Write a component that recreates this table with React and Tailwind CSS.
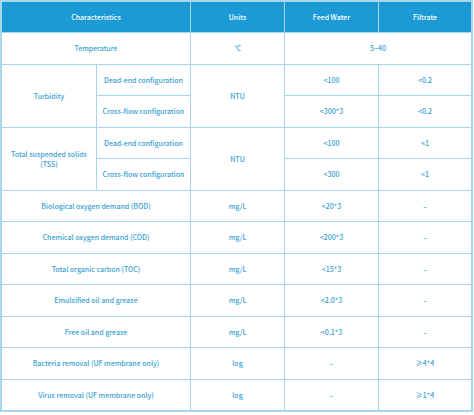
import React from "react";

const head = "bg-[#1b9ad6] text-white flex items-center justify-center text-center whitespace-nowrap";
const cell = "bg-white text-[#3a9fd2] flex items-center justify-center text-center whitespace-nowrap leading-[1.2]";

const simpleRows = [
  ["Biological oxygen demand (BOD)", "mg/L", "<20*3", "–"],
  ["Chemical oxygen demand (COD)", "mg/L", "<200*3", "–"],
  ["Total organic carbon (TOC)", "mg/L", "<15*3", "–"],
  ["Emulsified oil and grease", "mg/L", "<2.0*3", "–"],
  ["Free oil and grease", "mg/L", "<0.1*3", "–"],
  ["Bacteria removal (UF membrane only)", "log", "–", "≥4*4"],
  ["Virus removal (UF membrane only)", "log", "–", "≥1*4"],
];

const App = () => {
  return (
    <div
      className="w-[473px] h-[412px] bg-white"
      style={{ fontFamily: "'Noto Sans CJK SC', Lato, sans-serif" }}
    >
      <div className="w-full h-full border-2 border-[#a8d6ec] bg-[#a8d6ec] grid grid-cols-[94px_93px_93px_93px_92px] grid-rows-[repeat(13,minmax(0,1fr))] gap-px text-[7px] font-medium">
        {/* header */}
        <div className={`${head} col-span-2`}>Characteristics</div>
        <div className={head}>Units</div>
        <div className={head}>Feed Water</div>
        <div className={head}>Filtrate</div>

        {/* temperature */}
        <div className={`${cell} col-span-2`}>Temperature</div>
        <div className={cell}>°C</div>
        <div className={`${cell} col-span-2`}>5~40</div>

        {/* turbidity */}
        <div className={`${cell} row-span-2`}>Turbidity</div>
        <div className={cell}>Dead-end configuration</div>
        <div className={`${cell} row-span-2`}>NTU</div>
        <div className={cell}>&lt;100</div>
        <div className={cell}>&lt;0.2</div>
        <div className={cell}>Cross-flow configuration</div>
        <div className={cell}>&lt;300*3</div>
        <div className={cell}>&lt;0.2</div>

        {/* TSS */}
        <div className={`${cell} row-span-2 flex-col leading-[10px]`}>
          <span>Total suspended solids</span>
          <span>(TSS)</span>
        </div>
        <div className={cell}>Dead-end configuration</div>
        <div className={`${cell} row-span-2`}>NTU</div>
        <div className={cell}>&lt;100</div>
        <div className={cell}>&lt;1</div>
        <div className={cell}>Cross-flow configuration</div>
        <div className={cell}>&lt;300</div>
        <div className={cell}>&lt;1</div>

        {simpleRows.map(([name, unit, feed, filt]) => (
          <React.Fragment key={name}>
            <div className={`${cell} col-span-2`}>{name}</div>
            <div className={cell}>{unit}</div>
            <div className={cell}>{feed}</div>
            <div className={cell}>{filt}</div>
          </React.Fragment>
        ))}
      </div>
    </div>
  );
};

export default App;
